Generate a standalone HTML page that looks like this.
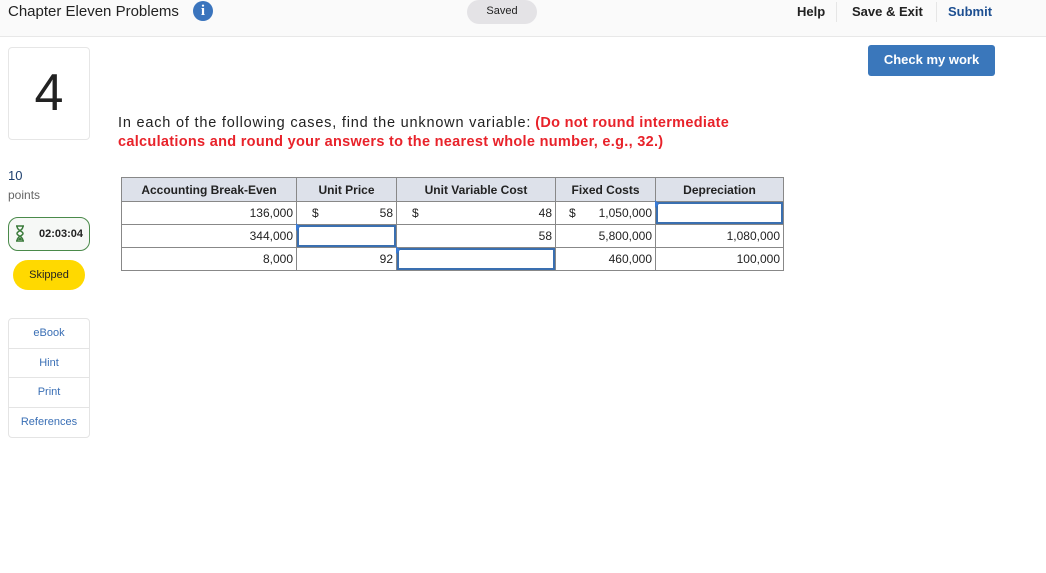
<!DOCTYPE html>
<html><head><style>
*{margin:0;padding:0;box-sizing:border-box}
body{width:1046px;height:573px;background:#fff;font-family:"Liberation Sans",sans-serif;position:relative;overflow:hidden;color:#222}
.hdr{position:absolute;left:0;top:0;width:1046px;height:37px;background:#fafafa;border-bottom:1px solid #e8e8e8}
.abs{position:absolute}
table{border-collapse:collapse;position:absolute;left:121px;top:177px;font-size:12px}
td,th{border:1px solid #888;height:23px;padding:0 3px;text-align:right;vertical-align:middle}
th{background:#dde1ea;text-align:center;font-weight:bold;height:24px}
.inp{box-shadow:inset 0 0 0 2px #3a6fb0;position:relative}
.inp:before{content:"";position:absolute;left:0;top:0;border-top:4px solid transparent;border-bottom:4px solid transparent;border-left:4px solid #3a7bd5;transform:translate(-1px,-2px)}
.side{position:absolute;left:8px;width:82px;border:1px solid #e4e4e4;border-radius:4px}
.side div{height:29.5px;line-height:29.5px;text-align:center;font-size:11px;color:#3a6fb5;border-bottom:1px solid #e4e4e4}
.side div:last-child{border-bottom:none}
</style></head><body>
<div class="hdr"></div>
<div class="abs" style="left:8px;top:3px;font-size:15px;color:#222">Chapter Eleven Problems</div>
<div class="abs" style="left:193px;top:1px;width:20px;height:20px;border-radius:50%;background:#3a74bd;color:#fff;font-weight:bold;font-family:'Liberation Serif',serif;font-size:15px;text-align:center;line-height:20px">i</div>
<div class="abs" style="left:467px;top:0;width:70px;height:24px;border-radius:12px;background:#e4e3e6;font-size:11px;text-align:center;line-height:22px">Saved</div>
<div class="abs" style="left:797px;top:4px;font-size:13px;font-weight:bold">Help</div>
<div class="abs" style="left:836px;top:2px;width:1px;height:20px;background:#e6e6e6"></div>
<div class="abs" style="left:852px;top:4px;font-size:13px;font-weight:bold">Save &amp; Exit</div>
<div class="abs" style="left:936px;top:2px;width:1px;height:20px;background:#e6e6e6"></div>
<div class="abs" style="left:948px;top:4px;font-size:13px;font-weight:bold;color:#1d4f91">Submit</div>
<div class="abs" style="left:868px;top:45px;width:127px;height:31px;background:#3a77bb;border-radius:3px;color:#fff;font-weight:bold;font-size:13px;text-align:center;line-height:30px">Check my work</div>
<div class="abs" style="left:8px;top:47px;width:82px;height:93px;border:1px solid #e6e6e6;border-radius:4px;font-size:52px;text-align:center;line-height:90px;color:#222">4</div>
<div class="abs" style="left:8px;top:168px;font-size:13px;color:#1d3f6e">10</div>
<div class="abs" style="left:8px;top:188px;font-size:12px;color:#666">points</div>
<div class="abs" style="left:8px;top:217px;width:82px;height:34px;border:1px solid #4a8a4a;border-radius:10px;background:#f6f8f6;font-size:11px;font-weight:bold;line-height:32px;padding-left:30px">02:03:04</div>
<svg class="abs" style="left:15px;top:225px" width="10" height="17" viewBox="0 0 10 17"><path d="M1 1h8M1 16h8M2 1c0 5 6 5 6 7.5S2 11 2 16M8 1c0 5-6 5-6 7.5S8 11 8 16" stroke="#3a7a3a" stroke-width="1.5" fill="none"/><path d="M3 15c1-3 3-3 4 0z" fill="#3a7a3a"/></svg>
<div class="abs" style="left:13px;top:260px;width:72px;height:30px;border-radius:15px;background:#ffd900;font-size:11px;text-align:center;line-height:30px">Skipped</div>
<div class="side" style="top:318px"><div>eBook</div><div>Hint</div><div>Print</div><div>References</div></div>
<div class="abs" style="left:118px;top:114px;font-size:14.5px;line-height:19px;color:#222;white-space:nowrap"><span style="letter-spacing:0.8px">In each of the following cases, find the unknown variable:</span> <b style="color:#e8222a;letter-spacing:0.3px">(Do not round intermediate<br>calculations and round your answers to the nearest whole number, e.g., 32.)</b></div>
<table>
<tr><th style="width:175px">Accounting Break-Even</th><th style="width:100px">Unit Price</th><th style="width:159px">Unit Variable Cost</th><th style="width:100px">Fixed Costs</th><th style="width:128px">Depreciation</th></tr>
<tr><td>136,000</td><td><span style="float:left;padding-left:12px">$</span>58</td><td><span style="float:left;padding-left:12px">$</span>48</td><td><span style="float:left;padding-left:10px">$</span>1,050,000</td><td class="inp"></td></tr>
<tr><td>344,000</td><td class="inp"></td><td>58</td><td>5,800,000</td><td>1,080,000</td></tr>
<tr><td>8,000</td><td>92</td><td class="inp"></td><td>460,000</td><td>100,000</td></tr>
</table>
</body></html>
